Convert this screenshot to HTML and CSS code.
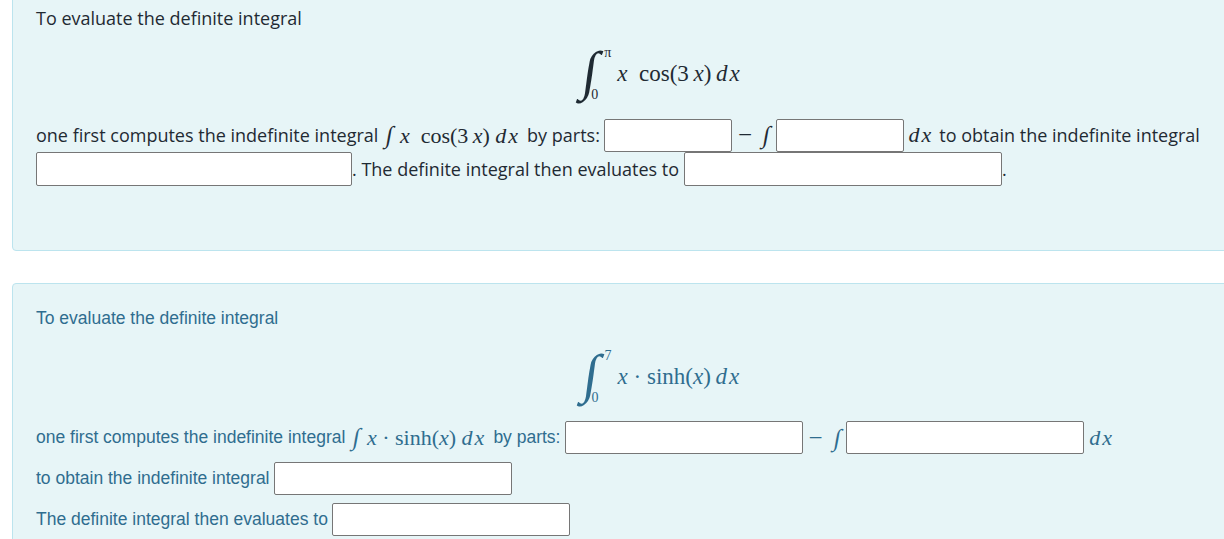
FILE: index.html
```html
<!DOCTYPE html>
<html lang="en">
  <head>
    <meta charset="UTF-8" />
    <title>Definite integrals by parts</title>
    <link rel="stylesheet" href="styles.css">
  </head>

  <body>
    <div class="panel panel-first">
      <p class="intro">To evaluate the definite integral</p>
      <div class="display">
        <span class="bigint">∫</span>
        <span class="limits"><span class="lim lim-up">π</span><span class="lim">0</span></span>
        <span class="math math-big"><i>x</i>&nbsp; cos(3&thinsp;<i>x</i>)&thinsp;<i class="dx">dx</i></span>
      </div>
      <div class="line">
        <span>one first computes the indefinite integral</span>
        <span class="math inline"><span class="int">∫</span><i>x</i>&nbsp; cos(3&thinsp;<i>x</i>)&nbsp;<i class="dx">dx</i></span>
        <span>by parts:</span>
        <input class="box box-s" type="text">
        <span class="math"><span class="minus">−</span><span class="int int-bare">∫</span></span>
        <input class="box box-s" type="text">
        <span class="math inline-end"><i class="dx">dx</i></span>
        <span>to obtain the indefinite integral</span>
      </div>
      <div class="line line-tight">
        <input class="box box-m" type="text">
        <span>. The definite integral then evaluates to</span>
        <input class="box box-l" type="text">
        <span>.</span>
      </div>
    </div>

    <div class="panel panel-second">
      <p class="intro">To evaluate the definite integral</p>
      <div class="display">
        <span class="bigint">∫</span>
        <span class="limits"><span class="lim lim-up">7</span><span class="lim">0</span></span>
        <span class="math math-big"><i>x</i> · sinh(<i>x</i>)&thinsp;<i class="dx">dx</i></span>
      </div>
      <div class="row">
        <span>one first computes the indefinite integral</span>
        <span class="math inline"><span class="int">∫</span><i>x</i> · sinh(<i>x</i>)&nbsp;<i class="dx">dx</i></span>
        <span>by parts:</span>
        <input class="box box-w" type="text">
        <span class="math"><span class="minus">−</span><span class="int int-bare">∫</span></span>
        <input class="box box-w" type="text">
        <span class="math inline-end"><i class="dx">dx</i></span>
      </div>
      <div class="row">
        <span>to obtain the indefinite integral</span>
        <input class="box box-w" type="text">
      </div>
      <div class="row">
        <span>The definite integral then evaluates to</span>
        <input class="box box-w" type="text">
      </div>
    </div>
  </body>
</html>
```

FILE: styles.css
```css
html,
body {
  margin: 0;
  height: 539px;
  overflow: hidden;
  background-color: #fff;
}

body {
  padding-left: 12px;
  width: 1230px;
}

.panel {
  background-color: #e7f5f7;
  border: 1px solid #bce4ee;
  border-radius: 4px;
}

.panel-first {
  margin-top: -10px;
  height: 261px;
  box-sizing: border-box;
  padding: 15px 0 0 23px;
  color: #1f2a33;
  font-family: "Open Sans", sans-serif;
  font-size: 18px;
}

.panel-second {
  margin-top: 32px;
  height: 270px;
  box-sizing: border-box;
  padding: 22px 0 0 23px;
  color: #2f6d8f;
  font-family: "Liberation Sans", sans-serif;
  font-size: 17.5px;
}

.intro {
  margin: 0;
  line-height: 24px;
}

.display {
  display: flex;
  justify-content: center;
  align-items: center;
  width: 1212px;
  margin-left: -23px;
  padding-left: 76px;
  box-sizing: border-box;
  height: 64px;
  margin-top: 12px;
}

.panel-second .display {
  margin-top: 15px;
}

.bigint {
  font-family: "Liberation Serif", serif;
  font-style: italic;
  font-size: 54px;
  line-height: 60px;
  transform: translate(11px, -3px) skewX(-8deg);
}

.limits {
  display: flex;
  flex-direction: column;
  justify-content: space-between;
  height: 56px;
  margin: 0 6px 0 4px;
  font-family: "Liberation Serif", serif;
  font-size: 14px;
  line-height: 14px;
}

.lim-up {
  margin-left: 13px;
}

.math {
  font-family: "Liberation Serif", serif;
  font-size: 22px;
}

.math-big {
  font-size: 23px;
}

.inline {
  margin: 0 3px 0 4px;
}

.inline-end {
  margin: 0 2px 0 1px;
}

.dx {
  letter-spacing: 2px;
}

.int {
  display: inline-block;
  font-style: italic;
  font-size: 24px;
  margin-right: 7px;
  transform: skewX(-10deg);
}

.int-bare {
  margin-right: 2px;
}

.minus {
  font-size: 25px;
  margin: 0 11px 0 2px;
}

.line,
.row {
  display: flex;
  align-items: center;
  gap: 4px;
  white-space: nowrap;
}

.line {
  height: 34px;
}

.line-tight {
  gap: 0;
}

.panel-first .display + .line {
  margin-top: 12px;
}

.row {
  height: 41px;
}

.panel-second .display + .row {
  margin-top: 8px;
}

.box {
  height: 33px;
  padding: 0;
  box-sizing: border-box;
  border: 1px solid #767676;
  border-radius: 2px;
  background-color: #fff;
}

.box-s {
  width: 128px;
}

.box-m {
  width: 316px;
  height: 34px;
}

.box-l {
  width: 318px;
  height: 34px;
  margin-left: 5px;
}

.box-w {
  width: 238px;
}
```
